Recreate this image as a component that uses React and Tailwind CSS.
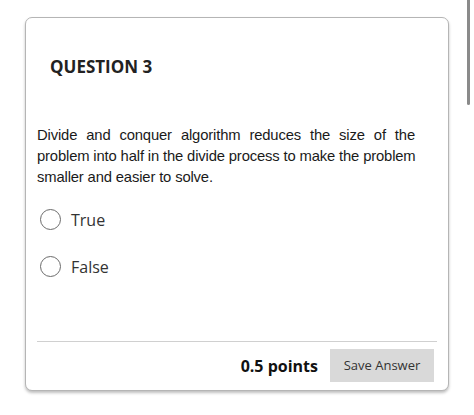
export default function App() {
  const lines = [
    'Divide and conquer algorithm reduces the size of the',
    'problem into half in the divide process to make the problem',
  ];
  return (
    <div className="relative w-[474px] h-[415px] bg-white pl-[25px] pt-[17px]">
      {/* scrollbar */}
      <div className="absolute left-[467px] top-0 w-[3px] h-[105px] bg-[#8a8a8a] rounded-b-sm" />

      <div className="w-[424px] h-[374px] flex flex-col border border-[#b5b5b5] rounded-[7px] bg-white shadow-[0_2px_3px_rgba(0,0,0,0.25)]">
        <h2 className="pl-[24px] pt-[37px] text-[17px] leading-[23px] font-bold text-[#222] font-['Open_Sans',sans-serif]">
          QUESTION 3
        </h2>

        <div className="mt-[47px] ml-[11px] w-[378px] text-[14.8px] leading-[21px] tracking-[-0.15px] text-[#1a1a1a] font-['Liberation_Sans',Arial,sans-serif]">
          {lines.map(l => (
            <p key={l} className="whitespace-nowrap text-justify [text-align-last:justify]">{l}</p>
          ))}
          <p>smaller and easier to solve.</p>
        </div>

        <div className="mt-[21px] pl-[14px] flex flex-col gap-[26px] font-['Open_Sans',sans-serif]">
          {['True', 'False'].map(label => (
            <label key={label} className="flex items-center gap-[10px] h-[21px]">
              <span className="w-[21px] h-[21px] rounded-full border-[1.5px] border-[#6b6b6b] bg-white" />
              <span className="text-[16px] text-[#333]">{label}</span>
            </label>
          ))}
        </div>

        <div className="mt-auto mx-[11px] border-t border-[#d0d0d0]" />
        <div className="flex items-center justify-end gap-[12px] pr-[14px] pt-[7px] pb-[8px] font-['Open_Sans',sans-serif]">
          <span className="text-[16px] font-bold text-[#111]">0.5 points</span>
          <button className="w-[104px] h-[33px] bg-[#d9d9d9] text-[13px] text-[#333]">Save Answer</button>
        </div>
      </div>
    </div>
  );
}
